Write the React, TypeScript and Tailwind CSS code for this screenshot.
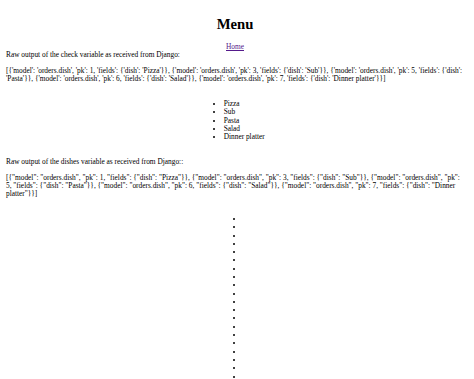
import React from "react";

const checkRaw =
  "[{'model': 'orders.dish', 'pk': 1, 'fields': {'dish': 'Pizza'}}, {'model': 'orders.dish', 'pk': 3, 'fields': {'dish': 'Sub'}}, {'model': 'orders.dish', 'pk': 5, 'fields': {'dish': 'Pasta'}}, {'model': 'orders.dish', 'pk': 6, 'fields': {'dish': 'Salad'}}, {'model': 'orders.dish', 'pk': 7, 'fields': {'dish': 'Dinner platter'}}]";

const dishesRaw =
  '[{"model": "orders.dish", "pk": 1, "fields": {"dish": "Pizza"}}, {"model": "orders.dish", "pk": 3, "fields": {"dish": "Sub"}}, {"model": "orders.dish", "pk": 5, "fields": {"dish": "Pasta"}}, {"model": "orders.dish", "pk": 6, "fields": {"dish": "Salad"}}, {"model": "orders.dish", "pk": 7, "fields": {"dish": "Dinner platter"}}]';

const dishes = ["Pizza", "Sub", "Pasta", "Salad", "Dinner platter"];

export default function App() {
  return (
    <div className="min-h-[379px] bg-white px-[6px] pr-[10px] font-['Liberation_Serif',serif] text-[7.36px] leading-[8.3px] text-black overflow-hidden">
      <div className="text-center">
        <h1 className="pt-[15.5px] mb-[10px] text-[14.7px] leading-[17px] font-bold">Menu</h1>
        <a href="#" className="text-[#551a8b] underline">
          Home
        </a>
      </div>
      <div>Raw output of the check variable as received from Django:</div>
      <p className="mt-[7.7px]">{checkRaw}</p>

      {/* loop over check */}
      <div className="text-center mt-[16.6px]">
        <ul className="inline-block list-disc pl-[18.4px] text-left">
          {dishes.map((d) => (
            <li key={d}>{d}</li>
          ))}
        </ul>
      </div>

      <div className="mt-[16.2px]">Raw output of the dishes variable as received from Django::</div>
      <p className="mt-[7.7px]">{dishesRaw}</p>

      {/* looping over the string gives empty items */}
      <div className="text-center mt-[16.4px]">
        <ul className="inline-block list-disc pl-[18.4px] text-left">
          {Array.from({ length: 30 }).map((_, i) => (
            <li key={i} className="h-[8.3px]"></li>
          ))}
        </ul>
      </div>
    </div>
  );
}
